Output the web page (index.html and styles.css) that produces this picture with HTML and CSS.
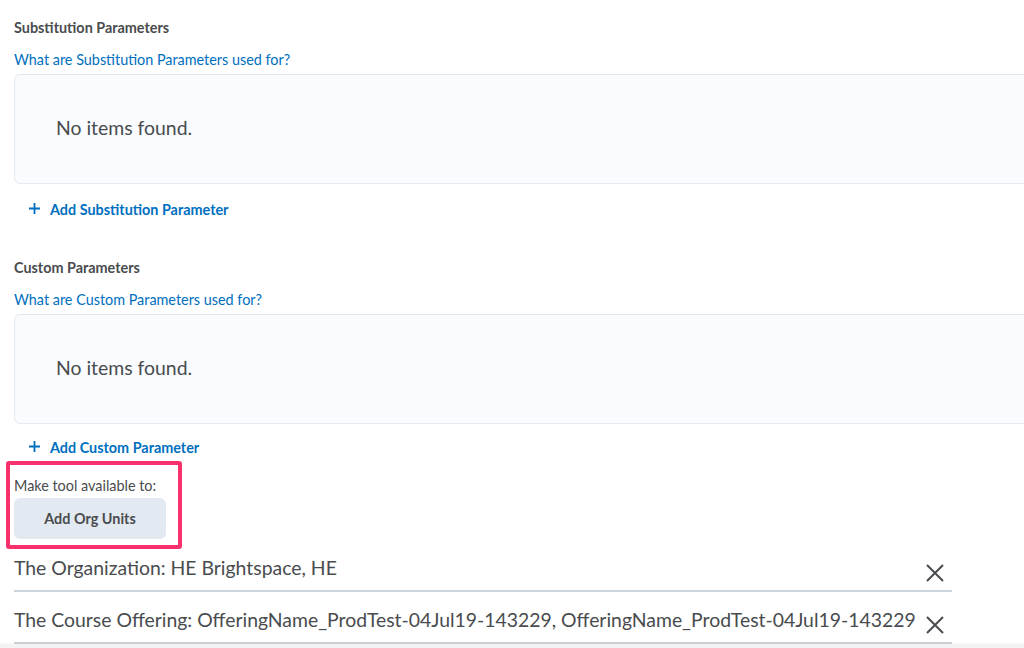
FILE: index.html
```html
<!DOCTYPE html>
<html lang="en">
<head>
    <meta charset="UTF-8">
    <title>External Tool Settings</title>
    <link rel="stylesheet" href="styles.css">
</head>
<body>
    <div class="page">
        <div class="param-section">
            <h2 class="section-title">Substitution Parameters</h2>
            <a class="help-link" href="#">What are Substitution Parameters used for?</a>
            <div class="list-box">No items found.</div>
            <a class="add-link" href="#">
                <svg class="plus-icon" viewBox="0 0 12 12"><path d="M6 0v12M0 6h12"/></svg>
                Add Substitution Parameter
            </a>
        </div>

        <div class="param-section param-section--second">
            <h2 class="section-title">Custom Parameters</h2>
            <a class="help-link" href="#">What are Custom Parameters used for?</a>
            <div class="list-box">No items found.</div>
            <a class="add-link add-link--tight" href="#">
                <svg class="plus-icon" viewBox="0 0 12 12"><path d="M6 0v12M0 6h12"/></svg>
                Add Custom Parameter
            </a>
        </div>

        <div class="highlight">
            <div class="avail-label">Make tool available to:</div>
            <button class="org-btn">Add Org Units</button>
        </div>

        <div class="org-list">
            <div class="org-row">
                <span class="org-name">The Organization: HE Brightspace, HE</span>
                <svg class="close-icon" viewBox="0 0 18 18"><path d="M1 1l16 16M17 1L1 17"/></svg>
            </div>
            <div class="org-row">
                <span class="org-name">The Course Offering: OfferingName_ProdTest-04Jul19-143229, OfferingName_ProdTest-04Jul19-143229</span>
                <svg class="close-icon" viewBox="0 0 18 18"><path d="M1 1l16 16M17 1L1 17"/></svg>
            </div>
        </div>
    </div>
    <div class="footer-bar"></div>
</body>
</html>
```

FILE: styles.css
```css
html {
    overflow: hidden;
}

body {
    margin: 0;
    background: #ffffff;
    color: #494c4e;
    font-family: Lato, 'Noto Sans', sans-serif;
}

.page {
    padding: 0 0 0 14px;
}

.param-section {
    padding-top: 18px;
}

.param-section--second {
    padding-top: 38px;
}

.section-title {
    margin: 0;
    font-size: 14.4px;
    font-weight: 700;
    line-height: 20px;
    color: #494c4e;
}

.help-link {
    display: block;
    margin-top: 12px;
    font-size: 14.4px;
    line-height: 20px;
    color: #006fbf;
    text-decoration: none;
}

.list-box {
    margin-top: 4px;
    margin-right: -30px;
    display: flex;
    align-items: center;
    padding: 0 41px 3px;
    height: 105px;
    border: 1px solid #e3e9f1;
    border-radius: 6px;
    background: #f9fbff;
    font-size: 19.4px;
    color: #494c4e;
}

.add-link {
    display: flex;
    align-items: center;
    gap: 10px;
    margin: 16px 0 0 15px;
    font-size: 14.4px;
    font-weight: 700;
    line-height: 20px;
    color: #006fbf;
    text-decoration: none;
}

.add-link--tight {
    margin-top: 14px;
}

.plus-icon {
    width: 11px;
    height: 11px;
    margin-top: -4px;
    stroke: #006fbf;
    stroke-width: 2;
    fill: none;
}

.highlight {
    width: 152px;
    margin: 3px 0 0 -8px;
    padding: 11px 12px 6px 4px;
    border: 4px solid #f8306b;
    border-radius: 3px;
}

.avail-label {
    font-size: 14.4px;
    line-height: 20px;
}

.org-btn {
    margin-top: 2px;
    width: 152px;
    height: 41px;
    border: none;
    border-radius: 6px;
    background: #e3e9f1;
    color: #494c4e;
    font-family: inherit;
    font-size: 14.4px;
    font-weight: 700;
}

.org-list {
    width: 938px;
    margin-top: -9px;
}

.org-row {
    display: flex;
    align-items: flex-start;
    justify-content: space-between;
    padding: 16px 8px 10px 0;
    border-bottom: 2px solid #cdd5dc;
}

.org-name {
    font-size: 19.4px;
    line-height: 24px;
    white-space: nowrap;
}

.close-icon {
    flex: none;
    width: 18px;
    height: 18px;
    margin: 8px 0 -2px;
    stroke: #494c4e;
    stroke-width: 2;
    fill: none;
}

.footer-bar {
    margin-top: 1px;
    height: 30px;
    background: #f1f3f5;
    box-shadow: 0 -1px 3px rgba(0, 0, 0, 0.08);
}
```
